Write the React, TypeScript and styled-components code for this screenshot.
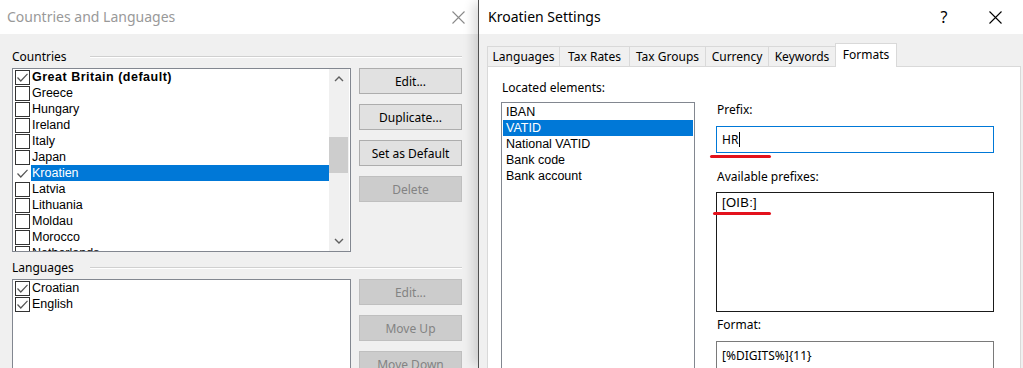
import React from "react";
import styled, { createGlobalStyle } from "styled-components";

const UI_FONT = `"Noto Sans", "Open Sans", sans-serif`;
const LIST_FONT = `"Liberation Sans", Arial, sans-serif`;

const GlobalStyle = createGlobalStyle`
  html, body {
    margin: 0;
    padding: 0;
    background: #f0f0f0;
  }
  body {
    width: 1023px;
    height: 368px;
    overflow: hidden;
    font-family: ${UI_FONT};
    font-size: 12px;
    color: #000;
  }
  * { box-sizing: border-box; }
`;

const Screen = styled.div`
  display: flex;
  width: 1023px;
  height: 368px;
  overflow: hidden;
  background: #f0f0f0;
`;

// --- window chrome ---

const LeftWindow = styled.div`
  width: 478px;
  flex: none;
  display: flex;
  flex-direction: column;
  background: #f0f0f0;
`;

const RightWindow = styled.div`
  flex: 1;
  display: flex;
  flex-direction: column;
  background: #f0f0f0;
  border-left: 1px solid #505050;
  box-shadow: -8px 0 10px -3px rgba(0, 0, 0, 0.14);
  position: relative;
  z-index: 1;
`;

const TitleBar = styled.div<{ $active?: boolean }>`
  height: 34px;
  flex: none;
  background: #fff;
  display: flex;
  align-items: center;
  padding: 0 0 0 ${(p) => (p.$active ? 9 : 7)}px;
  font-family: ${UI_FONT};
  font-size: 14px;
  color: ${(p) => (p.$active ? "#000" : "#999")};
`;

const TitleText = styled.div`
  flex: 1;
  white-space: nowrap;
  padding-bottom: 1px;
`;

const TitleButton = styled.div<{ $w: number }>`
  width: ${(p) => p.$w}px;
  height: 34px;
  display: flex;
  align-items: center;
  justify-content: center;
  font-size: 16px;
`;

const CloseIcon = ({ color }: { color: string }) => (
  <svg width="13" height="13" viewBox="0 0 13 13">
    <path d="M0.5 0.5 L12.5 12.5 M12.5 0.5 L0.5 12.5" stroke={color} strokeWidth="1.1" fill="none" />
  </svg>
);

// --- left window body ---

const LeftBody = styled.div`
  padding: 15px 16px 0 12px;
  display: grid;
  grid-template-columns: 339px 103px;
  column-gap: 8px;
  align-content: start;
`;

const GroupHeader = styled.div<{ $top: number }>`
  grid-column: 1 / -1;
  display: grid;
  grid-template-columns: 78px 1fr;
  align-items: center;
  height: 16px;
  margin-top: ${(p) => p.$top}px;
  margin-bottom: 3px;
  line-height: 16px;
  white-space: nowrap;
`;

const GroupLine = styled.div`
  height: 2px;
  border-top: 1px solid #d0d0d0;
  border-bottom: 1px solid #fff;
`;

const CheckList = styled.div<{ $h: number }>`
  height: ${(p) => p.$h}px;
  background: #fff;
  border: 1px solid #828790;
  display: grid;
  grid-template-columns: 1fr 20px;
  padding-right: 1px;
  overflow: hidden;
`;

const ListRows = styled.div`
  display: flex;
  flex-direction: column;
  overflow: hidden;
`;

const CheckRow = styled.div<{ $selected?: boolean; $bold?: boolean }>`
  height: 16px;
  flex: none;
  display: flex;
  font-family: ${LIST_FONT};
  font-size: 12.5px;
  line-height: 17px;
  font-weight: ${(p) => (p.$bold ? 700 : 400)};
  letter-spacing: ${(p) => (p.$bold ? "0.5px" : "0")};
  white-space: nowrap;

  .label {
    flex: 1;
    padding-left: 1px;
    background: ${(p) => (p.$selected ? "#0078d7" : "transparent")};
    color: ${(p) => (p.$selected ? "#fff" : "#000")};
  }
`;

const CheckCell = styled.div`
  width: 18px;
  flex: none;
  padding: 1px 0 0 2px;
`;

const Box = styled.div<{ $bordered: boolean }>`
  width: 15px;
  height: 15px;
  border: 1px solid ${(p) => (p.$bordered ? "#333" : "transparent")};
  display: flex;
  align-items: center;
  justify-content: center;
`;

const CheckMark = () => (
  <svg width="13" height="13" viewBox="0 0 13 13">
    <path d="M1.5 6.5 L4.8 10 L11.5 2.8" stroke="#555" strokeWidth="1.2" fill="none" />
  </svg>
);

const ScrollBar = styled.div`
  background: #f0f0f0;
  display: flex;
  flex-direction: column;
  align-items: stretch;
`;

const ScrollArrow = styled.div`
  height: 20px;
  display: flex;
  align-items: center;
  justify-content: center;
`;

const ScrollThumb = styled.div<{ $top: number; $h: number }>`
  margin-top: ${(p) => p.$top}px;
  height: ${(p) => p.$h}px;
  margin-right: 1px;
  background: #cdcdcd;
`;

const ScrollSpacer = styled.div`
  flex: 1;
`;

const Chevron = ({ up }: { up?: boolean }) => (
  <svg width="10" height="6" viewBox="0 0 10 6">
    <path
      d={up ? "M1 5 L5 1 L9 5" : "M1 1 L5 5 L9 1"}
      stroke="#606060"
      strokeWidth="1.4"
      fill="none"
    />
  </svg>
);

const ButtonColumn = styled.div`
  display: flex;
  flex-direction: column;
  gap: 10px;
`;

const Button = styled.div<{ $disabled?: boolean }>`
  height: 26px;
  display: flex;
  align-items: center;
  justify-content: center;
  font-family: ${UI_FONT};
  font-size: 12px;
  background: ${(p) => (p.$disabled ? "#cccccc" : "#e1e1e1")};
  border: 1px solid ${(p) => (p.$disabled ? "#bfbfbf" : "#adadad")};
  color: ${(p) => (p.$disabled ? "#838383" : "#000")};
  flex: none;
`;

// --- right window body ---

const RightBody = styled.div`
  padding: 9px 2px 0 8px;
  display: flex;
  flex-direction: column;
  flex: 1;
`;

const TabStrip = styled.div`
  display: flex;
  align-items: flex-end;
  height: 24px;
  position: relative;
  z-index: 1;
  margin-bottom: -1px;
`;

const Tab = styled.div<{ $w: number; $active?: boolean }>`
  width: ${(p) => p.$w}px;
  height: ${(p) => (p.$active ? 24 : 21)}px;
  display: flex;
  align-items: ${(p) => (p.$active ? "flex-start" : "center")};
  justify-content: center;
  padding-top: ${(p) => (p.$active ? 2 : 0)}px;
  background: ${(p) => (p.$active ? "#fff" : "#f0f0f0")};
  border: 1px solid #d9d9d9;
  border-bottom: ${(p) => (p.$active ? "none" : "1px solid #d9d9d9")};
  margin-left: -1px;
  white-space: nowrap;
  &:first-child { margin-left: 0; }
`;

const TabPanel = styled.div`
  flex: 1;
  background: #fff;
  border: 1px solid #d9d9d9;
  border-bottom: none;
  padding: 13px 0 0 13px;
  display: grid;
  grid-template-columns: 194px 278px;
  grid-template-rows: 16px 1fr;
  column-gap: 21px;
  row-gap: 6px;
`;

const FieldLabel = styled.div<{ $top?: number }>`
  height: 16px;
  line-height: 16px;
  padding-left: 1px;
  margin-top: ${(p) => p.$top ?? 0}px;
  white-space: nowrap;
`;

const ElementList = styled.div`
  grid-column: 1;
  grid-row: 2;
  background: #fff;
  border: 1px solid #828790;
  border-bottom: none;
  padding: 1px;
  display: flex;
  flex-direction: column;
`;

const ElementRow = styled.div<{ $selected?: boolean }>`
  height: 16px;
  line-height: 17px;
  padding-left: 3px;
  font-family: ${LIST_FONT};
  font-size: 12.5px;
  background: ${(p) => (p.$selected ? "#0078d7" : "transparent")};
  color: ${(p) => (p.$selected ? "#fff" : "#000")};
  white-space: nowrap;
`;

const FieldColumn = styled.div`
  grid-column: 2;
  grid-row: 2;
  display: flex;
  flex-direction: column;
`;

const TextInput = styled.div<{ $border: string; $open?: boolean }>`
  position: relative;
  height: 27px;
  margin-top: 8px;
  border: 1px solid ${(p) => p.$border};
  border-bottom-width: ${(p) => (p.$open ? 0 : 1)}px;
  background: #fff;
  display: flex;
  align-items: center;
  padding-left: 5px;
  font-family: ${UI_FONT};
  font-size: 12px;
  flex: none;
`;

const Caret = styled.span`
  display: inline-block;
  width: 1px;
  height: 15px;
  background: #000;
  margin-left: 1px;
`;

const PrefixBox = styled.div`
  position: relative;
  height: 120px;
  margin-top: 7px;
  border: 1px solid #1a1a1a;
  background: #fff;
  padding: 2px 0 0 5px;
  font-family: ${LIST_FONT};
  font-size: 13px;
  letter-spacing: 0.3px;
  line-height: 16px;
  flex: none;
`;

// hand-drawn red marker lines over the screenshot
const Marker = styled.div<{ $left: number; $top: number; $w: number }>`
  position: absolute;
  left: ${(p) => p.$left}px;
  top: ${(p) => p.$top}px;
  width: ${(p) => p.$w}px;
  height: 3px;
  border-radius: 2px;
  background: #e3121c;
`;

const countries = [
  { name: "Great Britain (default)", checked: true, bold: true },
  { name: "Greece" },
  { name: "Hungary" },
  { name: "Ireland" },
  { name: "Italy" },
  { name: "Japan" },
  { name: "Kroatien", checked: true, selected: true },
  { name: "Latvia" },
  { name: "Lithuania" },
  { name: "Moldau" },
  { name: "Morocco" },
  { name: "Netherlands" },
];

const languages = [
  { name: "Croatian", checked: true },
  { name: "English", checked: true },
];

const tabs = [
  { label: "Languages", w: 73 },
  { label: "Tax Rates", w: 71 },
  { label: "Tax Groups", w: 77 },
  { label: "Currency", w: 64 },
  { label: "Keywords", w: 68 },
  { label: "Formats", w: 62, active: true },
];

const elements = ["IBAN", "VATID", "National VATID", "Bank code", "Bank account"];

type Item = { name: string; checked?: boolean; bold?: boolean; selected?: boolean };

function Row({ item }: { item: Item }) {
  return (
    <CheckRow $selected={item.selected} $bold={item.bold}>
      <CheckCell>
        <Box $bordered={!item.selected}>{item.checked && <CheckMark />}</Box>
      </CheckCell>
      <span className="label">{item.name}</span>
    </CheckRow>
  );
}

export default function App() {
  return (
    <>
      <GlobalStyle />
      <Screen>
        <LeftWindow>
          <TitleBar>
            <TitleText>Countries and Languages</TitleText>
            <TitleButton $w={39}>
              <CloseIcon color="#8a8a8a" />
            </TitleButton>
          </TitleBar>

          <LeftBody>
            <GroupHeader $top={0}>
              <span>Countries</span>
              <GroupLine />
            </GroupHeader>
            <CheckList $h={184}>
              <ListRows>
                {countries.map((c) => (
                  <Row key={c.name} item={c} />
                ))}
              </ListRows>
              <ScrollBar>
                <ScrollArrow>
                  <Chevron up />
                </ScrollArrow>
                <ScrollThumb $top={48} $h={36} />
                <ScrollSpacer />
                <ScrollArrow>
                  <Chevron />
                </ScrollArrow>
              </ScrollBar>
            </CheckList>
            <ButtonColumn>
              <Button>Edit...</Button>
              <Button>Duplicate...</Button>
              <Button>Set as Default</Button>
              <Button $disabled>Delete</Button>
            </ButtonColumn>

            <GroupHeader $top={8}>
              <span>Languages</span>
              <GroupLine />
            </GroupHeader>
            <CheckList $h={120}>
              <ListRows>
                {languages.map((l) => (
                  <Row key={l.name} item={l} />
                ))}
              </ListRows>
              <div />
            </CheckList>
            <ButtonColumn>
              <Button $disabled>Edit...</Button>
              <Button $disabled>Move Up</Button>
              <Button $disabled>Move Down</Button>
            </ButtonColumn>
          </LeftBody>
        </LeftWindow>

        <RightWindow>
          <TitleBar $active>
            <TitleText>Kroatien Settings</TitleText>
            <TitleButton $w={46}>?</TitleButton>
            <TitleButton $w={56}>
              <CloseIcon color="#000" />
            </TitleButton>
          </TitleBar>

          <RightBody>
            <TabStrip>
              {tabs.map((t) => (
                <Tab key={t.label} $w={t.w} $active={t.active}>
                  {t.label}
                </Tab>
              ))}
            </TabStrip>
            <TabPanel>
              <FieldLabel>Located elements:</FieldLabel>
              <div />
              <ElementList>
                {elements.map((e) => (
                  <ElementRow key={e} $selected={e === "VATID"}>
                    {e}
                  </ElementRow>
                ))}
              </ElementList>
              <FieldColumn>
                <FieldLabel>Prefix:</FieldLabel>
                <TextInput $border="#0078d7">
                  HR
                  <Caret />
                  <Marker $left={-7} $top={28} $w={61} />
                </TextInput>
                <FieldLabel $top={16}>Available prefixes:</FieldLabel>
                <PrefixBox>
                  [OIB:]
                  <Marker $left={-4} $top={19} $w={58} />
                </PrefixBox>
                <FieldLabel $top={5}>Format:</FieldLabel>
                <TextInput $border="#7a7a7a" $open>
                  [%DIGITS%]{"{11}"}
                </TextInput>
              </FieldColumn>
            </TabPanel>
          </RightBody>
        </RightWindow>
      </Screen>
    </>
  );
}
